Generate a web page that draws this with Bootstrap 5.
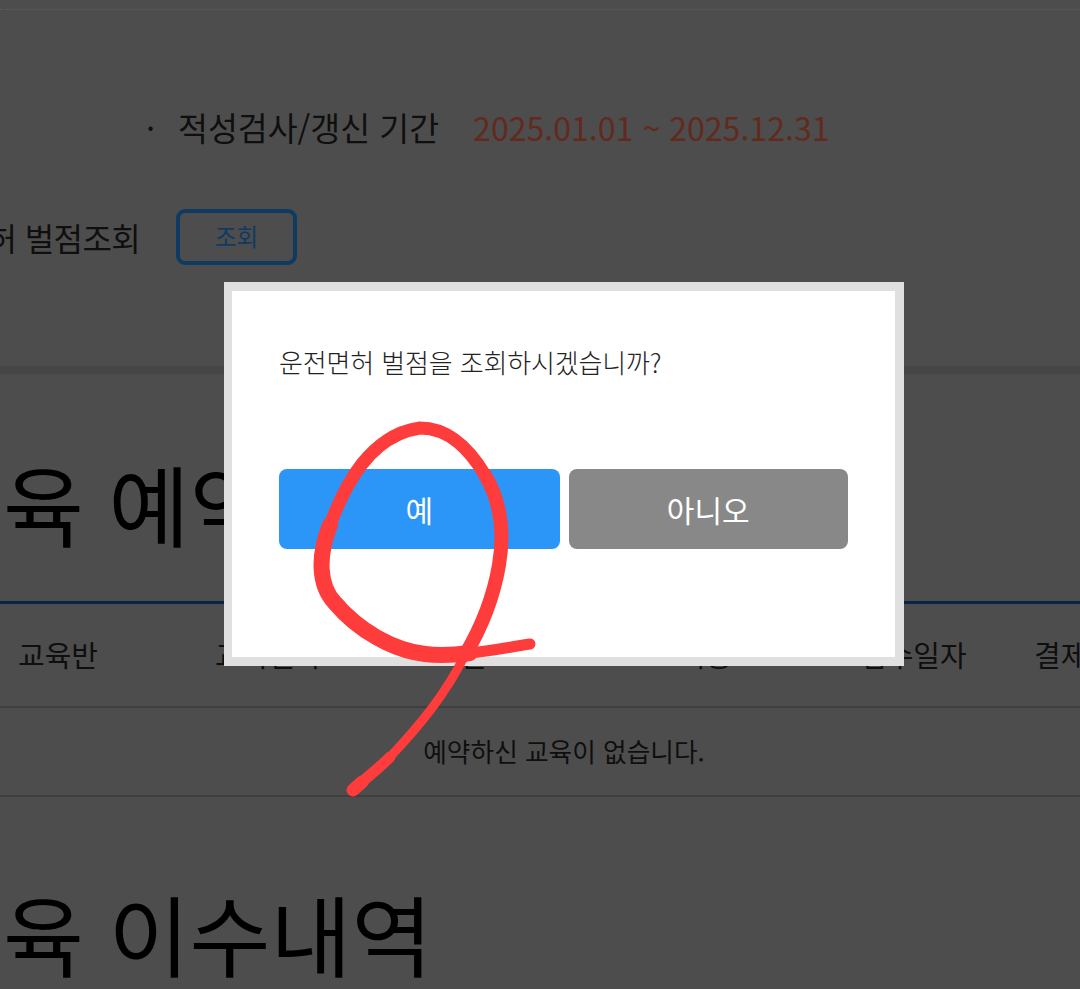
<!DOCTYPE html>
<html lang="ko">
<head>
<meta charset="utf-8">
<title>교육 예약</title>
<link href="https://cdn.jsdelivr.net/npm/bootstrap@5.3.0/dist/css/bootstrap.min.css" rel="stylesheet">
<style>
html,body{height:100%;overflow:hidden}
body{background:#4d4d4d;color:#0f0f0f;font-family:"Noto Sans CJK KR","Liberation Sans",sans-serif;font-weight:400;width:1080px;height:989px}
.top-dots{height:10px;border-bottom:1px dotted #5e5e5e}
.period-row{padding:95px 0 0 146px;font-size:32.5px;line-height:44px}
.period-dot{width:32px;display:inline-block}
.period-date{color:#622a1e;margin-left:34px;font-size:32.1px}
.points-row{margin-top:60px;gap:36px;margin-left:-99px;height:56px;font-size:32px;letter-spacing:-.6px}
.points-btn{width:121px;height:56px;border:4px solid #0f3a62;border-radius:9px;color:#0f3a62;font-size:23.5px;padding:0;background:transparent}
.sec-line{height:8px;background:#454545;margin-top:101px}
.big-head{font-size:88px;line-height:100px;color:#000;font-weight:400;margin:0 0 0 -78px;white-space:nowrap}
.head-one{margin-top:78px}
.resv-head{border-top:3px solid #0a2347;height:107px;margin-top:49px;font-size:29px;color:#0f0f0f;border-bottom:2px solid #3f3f3f;white-space:nowrap}
.hcell{flex:0 0 auto}
.c1{margin-left:18px;width:197px}.c2{width:218px}.c3{width:246px}.c4{width:181px}.c5{width:174px}
.empty-row{height:89px;border-bottom:2px solid #3f3f3f;font-size:25.7px;padding-left:48px}
.head-two{margin-top:85px}
.dlg{position:fixed;left:224px;top:282px;width:680px;height:384px;background:#fff;border:9px solid #e0e0e0;border-left-width:8px;padding:0 47px;color:#222}
.dlg-msg{font-size:26px;line-height:36px;margin-top:53px;letter-spacing:-.15px;font-weight:300}
.dlg-btns{margin-top:89px;gap:9px}
.dlg-btn{height:80px;border:0;border-radius:8px;color:#fff;font-size:30px;font-weight:400;padding:0}
.dlg-yes{width:281px;background:#2b96f8}
.dlg-no{width:280px;background:#888}
.scribble{position:fixed;left:0;top:0;width:1080px;height:989px;pointer-events:none}
</style>
</head>
<body>
<div class="top-dots"></div>
<div class="period-row"><span class="period-dot">·</span>적성검사/갱신 기간<span class="period-date">2025.01.01 ~ 2025.12.31</span></div>
<div class="points-row d-flex align-items-center"><span>운전면허 벌점조회</span><button type="button" class="btn points-btn">조회</button></div>
<div class="sec-line"></div>
<h2 class="big-head head-one">교육 예약내역</h2>
<div class="resv-head d-flex align-items-center">
  <span class="hcell c1">교육반</span><span class="hcell c2">교육일자</span><span class="hcell c3">기일</span><span class="hcell c4">비용</span><span class="hcell c5">접수일자</span><span class="hcell">결제</span>
</div>
<div class="empty-row d-flex align-items-center justify-content-center">예약하신 교육이 없습니다.</div>
<h2 class="big-head head-two">교육 이수내역</h2>

<div class="dlg">
  <p class="dlg-msg mb-0">운전면허 벌점을 조회하시겠습니까?</p>
  <div class="dlg-btns d-flex">
    <button type="button" class="btn dlg-btn dlg-yes">예</button>
    <button type="button" class="btn dlg-btn dlg-no">아니오</button>
  </div>
</div>

<svg class="scribble" viewBox="0 0 1080 989" fill="none" stroke="#ff3c3c" stroke-linecap="round" stroke-linejoin="round">
  <path stroke-width="11" d="M530 644C505 648 490 651 470 653"/>
  <path stroke-width="16" d="M470 653C455 655 440 656 425 654C392 650 358 630 335 603C318 585 318 555 330 525"/>
  <path stroke-width="13" d="M330 525C345 485 370 435 420 428C450 428 470 450 485 475"/>
  <path stroke-width="14" d="M485 475C500 500 505 530 499 565C493 600 480 630 465 655"/>
  <path stroke-width="9" d="M465 655C445 695 420 725 390 757"/>
  <path stroke-width="11" d="M390 757C380 767 370 775 362 782"/>
  <path stroke-width="13" d="M362 782L353 790"/>
</svg>
</body>
</html>
